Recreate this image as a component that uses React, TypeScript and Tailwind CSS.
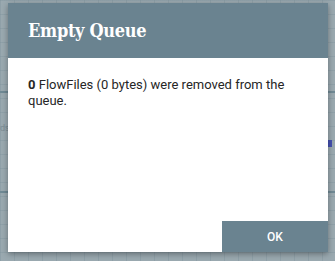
export default function App() {
  return (
    <div className="relative h-[261px] w-[335px] overflow-hidden bg-[#9aa9b0] bg-[linear-gradient(to_right,rgba(120,140,150,0.3)_1px,transparent_1px),linear-gradient(to_bottom,rgba(120,140,150,0.3)_1px,transparent_1px)] bg-[size:14px_14px] font-['Roboto',sans-serif]">
      {/* canvas bits behind the overlay */}
      <div className="absolute left-0 top-[91px] h-[2px] w-full bg-[#708a95]" />
      <div className="absolute left-0 top-[191px] h-[2px] w-full bg-[#708a95]" />
      <div className="absolute left-0 top-[122px] text-[9px] text-[#7d8d95]">ds</div>
      <div className="absolute left-[328px] top-[140px] h-[7px] w-[4px] bg-[#4450b0]" />

      {/* dialog */}
      <div className="absolute left-[8px] top-[3px] flex h-[249px] w-[320px] flex-col bg-white shadow-[0_2px_6px_rgba(0,0,0,0.35)]">
        <div className="flex h-[55px] items-center bg-[#6a8390] px-[20px]">
          <h2 className="font-['DejaVu_Serif_Condensed','DejaVu_Serif',serif] text-[18px] font-bold tracking-[-0.3px] text-white [font-stretch:condensed]">
            Empty Queue
          </h2>
        </div>
        <div className="flex-1 px-[20px] pt-[19px] text-[13px] leading-[16px] text-[#262626]">
          <span className="font-bold">0</span> FlowFiles (0 bytes) were removed from the queue.
        </div>
        <div className="flex justify-end">
          <button className="h-[31px] w-[106px] bg-[#6a8390] text-[12px] font-medium text-white">OK</button>
        </div>
      </div>
    </div>
  );
}
